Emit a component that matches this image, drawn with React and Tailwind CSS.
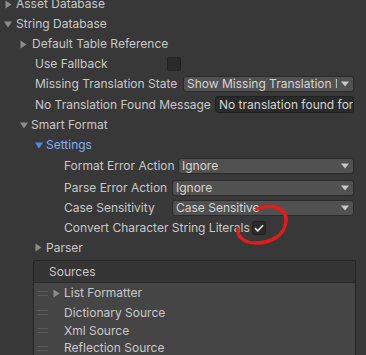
import React from 'react';

const font = { fontFamily: 'Inter, "Noto Sans", sans-serif' };

function Arrow({ open, blue }) {
    const color = blue ? '#4a8cf5' : '#8c8c8c';
    return open ? (
        <svg width="8" height="8" viewBox="0 0 8 8" className="shrink-0">
            <path d="M0 1.5 L8 1.5 L4 7.5 Z" fill={color} />
        </svg>
    ) : (
        <svg width="7" height="9" viewBox="0 0 7 9" className="shrink-0">
            <path d="M0.5 0.5 L6.5 4.5 L0.5 8.5 Z" fill={color} />
        </svg>
    );
}

function Dropdown({ text, left, top = 'h-[16px]' }) {
    return (
        <div className={`ml-auto flex ${top} items-center overflow-hidden rounded-[3px] border border-[#2a2a2a] bg-[#515151] pl-[3px] pr-[4px]`} style={{ width: 354 - left }}>
            <span className="flex-1 overflow-hidden whitespace-nowrap text-[#d4d4d4]">{text}</span>
            <svg width="8" height="6" viewBox="0 0 8 6" className="ml-1 shrink-0">
                <path d="M0 0.5 L8 0.5 L4 5.5 Z" fill="#c8c8c8" />
            </svg>
        </div>
    );
}

function Handle() {
    return (
        <div className="flex w-[11px] flex-col gap-[3px]">
            <div className="h-px bg-[#5a5a5a]" />
            <div className="h-px bg-[#5a5a5a]" />
        </div>
    );
}

export default function App() {
    return (
        <div className="relative h-[355px] w-[366px] overflow-hidden bg-[#383838] text-[12px] text-[#c8c8c8]" style={font}>
            <div className="-mt-[6px] flex flex-col">
                <div className="flex h-[20px] items-center pl-[5px]">
                    <Arrow />
                    <span className="ml-[4px]">Asset Database</span>
                </div>
                <div className="flex h-[20px] items-center pl-[4px]">
                    <Arrow open />
                    <span className="ml-[4px]">String Database</span>
                </div>
                <div className="flex h-[20px] items-center pl-[20px]">
                    <Arrow />
                    <span className="ml-[5px]">Default Table Reference</span>
                </div>
                <div className="flex h-[20px] items-center pl-[35px] pr-[12px]">
                    <span>Use Fallback</span>
                    <div className="ml-[59px] h-[14px] w-[14px] rounded-[2px] border border-[#212121] bg-[#2a2a2a]" />
                </div>
                <div className="flex h-[20px] items-center pl-[35px] pr-[12px]">
                    <span>Missing Translation State</span>
                    <Dropdown text="Show Missing Translation Message" left={183} />
                </div>
                <div className="flex h-[21px] items-center pl-[35px] pr-[12px]">
                    <span className="w-[178px] overflow-hidden whitespace-nowrap">No Translation Found Message</span>
                    <div className="ml-auto flex h-[17px] w-[139px] items-center overflow-hidden rounded-[3px] border border-[#212121] bg-[#2a2a2a] px-[3px]">
                        <span className="whitespace-nowrap text-[#d4d4d4]">No translation found for '{'{key}'}'</span>
                    </div>
                </div>
                <div className="flex h-[20px] items-center pl-[20px]">
                    <Arrow open />
                    <span className="ml-[3px]">Smart Format</span>
                </div>
                <div className="flex h-[20px] items-center pl-[35px]">
                    <Arrow open blue />
                    <span className="ml-[3px] text-[#7eaefa]">Settings</span>
                </div>
                <div className="flex h-[22px] items-center pl-[64px] pr-[12px]">
                    <span>Format Error Action</span>
                    <Dropdown text="Ignore" left={178} />
                </div>
                <div className="flex h-[21px] items-center pl-[64px] pr-[12px]">
                    <span>Parse Error Action</span>
                    <Dropdown text="Ignore" left={172} />
                </div>
                <div className="flex h-[20px] items-center pl-[64px] pr-[12px]">
                    <span>Case Sensitivity</span>
                    <Dropdown text="Case Sensitive" left={172} />
                </div>
                <div className="flex h-[20px] items-center pl-[64px]">
                    <span>Convert Character String Literals</span>
                    <div className="ml-[2px] flex h-[14px] w-[14px] items-center justify-center rounded-[2px] border border-[#212121] bg-[#2a2a2a]">
                        <svg width="10" height="8" viewBox="0 0 10 8">
                            <path d="M1 4.2 L3.8 6.8 L9 1.2" fill="none" stroke="#e6e6e6" strokeWidth="1.6" />
                        </svg>
                    </div>
                </div>
                <div className="flex h-[19px] items-center pl-[35px]">
                    <Arrow />
                    <span className="ml-[4px]">Parser</span>
                </div>
                <div className="ml-[33px] mr-[10px] mt-[3px] flex flex-col rounded-t-[3px] border border-b-0 border-[#242424]">
                    <div className="flex h-[22px] items-center border-b border-[#2a2a2a] bg-[#353535] pl-[15px]">Sources</div>
                    <div className="flex flex-col bg-[#454545] pb-[20px]">
                        <div className="flex h-[20px] items-center pl-[3px]">
                            <Handle />
                            <div className="ml-[5px]"><Arrow /></div>
                            <span className="ml-[4px]">List Formatter</span>
                        </div>
                        <div className="flex h-[19px] items-center pl-[3px]">
                            <Handle />
                            <span className="ml-[16px]">Dictionary Source</span>
                        </div>
                        <div className="flex h-[17px] items-center pl-[3px]">
                            <Handle />
                            <span className="ml-[16px]">Xml Source</span>
                        </div>
                        <div className="flex h-[18px] items-center pl-[3px]">
                            <Handle />
                            <span className="ml-[16px]">Reflection Source</span>
                        </div>
                    </div>
                </div>
            </div>
            <svg className="pointer-events-none absolute left-0 top-0" width="366" height="355">
                <path
                    d="M257 209 C269 203, 287 207, 286 221 C285 235, 272 243, 256 243 C244 243, 237 237, 238 229"
                    fill="none"
                    stroke="#e21b1b"
                    strokeWidth="3.5"
                    strokeLinecap="round"
                />
            </svg>
        </div>
    );
}
